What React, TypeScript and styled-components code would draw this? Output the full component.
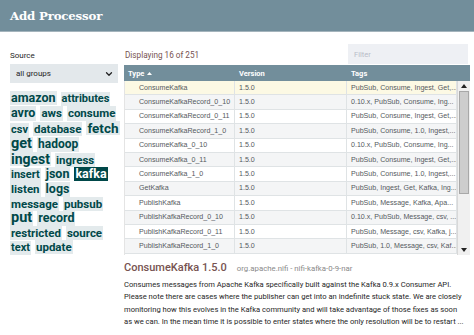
import React from 'react';
import styled, { createGlobalStyle } from 'styled-components';
import { ChevronDown } from 'lucide-react';

const Global = createGlobalStyle`
  body {
    margin: 0;
    background: #ffffff;
    font-family: Roboto, 'Liberation Sans', sans-serif;
  }
`;

const Dialog = styled.div`
  width: 474px;
  height: 335px;
  overflow: hidden;
  background: #ffffff;
`;

const Header = styled.header`
  height: 31px;
  background: #728e9b;
  border-bottom: 1px solid #a4b4bc;
  display: flex;
  align-items: center;
  padding-left: 10px;
  color: #ffffff;
  font-family: 'DejaVu Serif', serif;
  font-weight: bold;
  font-size: 11.8px;
  letter-spacing: -0.2px;
`;

const Body = styled.div`
  display: flex;
  gap: 6px;
  padding: 12px 4px 0 10px;
`;

const Side = styled.aside`
  width: 108px;
  display: flex;
  flex-direction: column;
`;

const Label = styled.div`
  font-size: 8px;
  color: #262626;
  margin-top: 7px;
  height: 13px;
`;

const Select = styled.div`
  height: 19px;
  background: #e3e8eb;
  display: flex;
  align-items: center;
  justify-content: space-between;
  padding: 0 4px 0 6px;
  font-size: 8px;
  color: #262626;
`;

const Cloud = styled.div`
  margin-top: 8px;
  width: 111px;
  display: flex;
  flex-wrap: wrap;
  align-items: baseline;
  column-gap: 4px;
  row-gap: 0;
`;

const Tag = styled.span<{ size: number; active?: boolean }>`
  font-size: ${p => p.size}px;
  font-weight: bold;
  line-height: 14.4px;
  height: 14.4px;
  padding: 0 1px;
  color: ${p => (p.active ? '#ffffff' : '#004849')};
  background: ${p => (p.active ? '#004849' : '#e3eaec')};
`;

const Main = styled.section`
  flex: 1;
  display: flex;
  flex-direction: column;
`;

const Toolbar = styled.div`
  height: 20px;
  display: flex;
  justify-content: space-between;
  align-items: flex-end;
`;

const Count = styled.div`
  font-size: 8.2px;
  color: #775351;
  padding: 0 0 4px 1px;
`;

const Filter = styled.div`
  width: 120px;
  height: 20px;
  margin-right: 2px;
  background: #eef0f4;
  color: #b8bcc8;
  font-size: 7.5px;
  display: flex;
  align-items: center;
  padding-left: 6px;
  box-sizing: border-box;
  align-self: flex-start;
`;

const Table = styled.div`
  margin-top: 1px;
  display: flex;
  flex-direction: column;
`;

const HeadRow = styled.div`
  height: 16px;
  display: grid;
  grid-template-columns: 111px 112px 1fr;
  background: #728e9b;
  color: #ffffff;
  font-size: 7.5px;
  font-weight: bold;
  align-items: center;
`;

const HeadCell = styled.div`
  padding-left: 4px;
  display: flex;
  align-items: center;
  gap: 3px;
`;

const BodyWrap = styled.div`
  height: 174px;
  display: flex;
  overflow: hidden;
  border-left: 1px solid #e4e4e4;
`;

const Rows = styled.div`
  flex: 1;
`;

const Row = styled.div<{ selected?: boolean; odd?: boolean }>`
  height: 14.4px;
  box-sizing: border-box;
  display: grid;
  grid-template-columns: 110px 112px 1fr;
  align-items: center;
  border-bottom: 1px solid #dfe3e5;
  background: ${p => (p.selected ? '#fcf9e4' : p.odd ? '#f4f5f6' : '#ffffff')};
  font-family: 'Liberation Sans', sans-serif;
  font-size: 7.1px;
  color: #555a5e;
`;

const Cell = styled.div<{ indent?: number }>`
  height: 100%;
  display: flex;
  align-items: center;
  padding-left: ${p => p.indent ?? 4}px;
  border-right: 1px solid #dfe3e5;
  white-space: nowrap;
  overflow: hidden;
`;

const Scroll = styled.div`
  width: 12px;
  display: flex;
  flex-direction: column;
  background: #f0f0f0;
  border-left: 1px solid #d8d8d8;
`;

const ScrollBtn = styled.div`
  height: 10px;
  display: flex;
  align-items: center;
  justify-content: center;
  background: #f0f0f0;
`;

const Thumb = styled.div`
  height: 103px;
  margin: 0 1px;
  background: #cdcdcd;
  border: 1px solid #a8a8a8;
  box-sizing: border-box;
`;

const Spacer = styled.div`
  flex: 1;
`;

const Details = styled.div`
  padding: 7px 0 0 0;
`;

const TitleLine = styled.div`
  display: flex;
  align-items: baseline;
  gap: 10px;
  line-height: 12px;
`;

const Title = styled.span`
  font-size: 11px;
  font-weight: 500;
  color: #775351;
`;

const Bundle = styled.span`
  font-size: 7.8px;
  color: #8a8a8a;
`;

const Desc = styled.p`
  margin: 4px 0 0;
  width: 340px;
  font-size: 7.6px;
  line-height: 12.4px;
  color: #262626;
`;

const tags: [string, number, boolean?][] = [
  ['amazon', 12.5],
  ['attributes', 11],
  ['avro', 12.5],
  ['aws', 11.5],
  ['consume', 11.5],
  ['csv', 11],
  ['database', 11.5],
  ['fetch', 13.5],
  ['get', 14.5],
  ['hadoop', 12],
  ['ingest', 14],
  ['ingress', 11.5],
  ['insert', 11],
  ['json', 12.5],
  ['kafka', 12.5, true],
  ['listen', 11.5],
  ['logs', 12.5],
  ['message', 11.5],
  ['pubsub', 11.5],
  ['put', 14.5],
  ['record', 12.5],
  ['restricted', 11.5],
  ['source', 11.5],
  ['text', 11],
  ['update', 11.5],
];

const rows: [string, string][] = [
  ['ConsumeKafka', 'PubSub, Consume, Ingest, Get,...'],
  ['ConsumeKafkaRecord_0_10', '0.10.x, PubSub, Consume, Ing...'],
  ['ConsumeKafkaRecord_0_11', 'PubSub, Consume, Ingest, Get,...'],
  ['ConsumeKafkaRecord_1_0', 'PubSub, Consume, 1.0, Ingest,...'],
  ['ConsumeKafka_0_10', '0.10.x, PubSub, Consume, Ing...'],
  ['ConsumeKafka_0_11', 'PubSub, Consume, Ingest, Get,...'],
  ['ConsumeKafka_1_0', 'PubSub, Consume, 1.0, Ingest,...'],
  ['GetKafka', 'PubSub, Ingest, Get, Kafka, Ing...'],
  ['PublishKafka', 'PubSub, Message, Kafka, Apa...'],
  ['PublishKafkaRecord_0_10', '0.10.x, PubSub, Message, csv, ...'],
  ['PublishKafkaRecord_0_11', 'PubSub, Message, csv, Kafka, j...'],
  ['PublishKafkaRecord_1_0', 'PubSub, 1.0, Message, csv, Kaf...'],
];

const Arrow = ({ up }: { up?: boolean }) => (
  <svg width="6" height="4" viewBox="0 0 6 4">
    <path d={up ? 'M0 4 L3 0 L6 4 Z' : 'M0 0 L3 4 L6 0 Z'} fill="#222" />
  </svg>
);

export default function App() {
  return (
    <Dialog>
      <Global />
      <Header>Add Processor</Header>
      <Body>
        <Side>
          <Label>Source</Label>
          <Select>
            all groups
            <ChevronDown size={10} strokeWidth={3} color="#222" />
          </Select>
          <Cloud>
            {tags.map(([t, s, a]) => (
              <Tag key={t} size={s} active={a}>
                {t}
              </Tag>
            ))}
          </Cloud>
        </Side>
        <Main>
          <Toolbar>
            <Count>Displaying 16 of 251</Count>
            <Filter>Filter</Filter>
          </Toolbar>
          <Table>
            <HeadRow>
              <HeadCell>
                Type
                <svg width="5" height="3" viewBox="0 0 5 3">
                  <path d="M0 3 L2.5 0 L5 3 Z" fill="#fff" />
                </svg>
              </HeadCell>
              <HeadCell>Version</HeadCell>
              <HeadCell>Tags</HeadCell>
            </HeadRow>
            <BodyWrap>
              <Rows>
                {rows.map(([type, tagText], i) => (
                  <Row key={type} selected={i === 0} odd={i % 2 === 1}>
                    <Cell indent={14}>{type}</Cell>
                    <Cell>1.5.0</Cell>
                    <Cell>{tagText}</Cell>
                  </Row>
                ))}
              </Rows>
              <Scroll>
                <ScrollBtn>
                  <Arrow up />
                </ScrollBtn>
                <Thumb />
                <Spacer />
                <ScrollBtn>
                  <Arrow />
                </ScrollBtn>
              </Scroll>
            </BodyWrap>
          </Table>
          <Details>
            <TitleLine>
              <Title>ConsumeKafka 1.5.0</Title>
              <Bundle>org.apache.nifi - nifi-kafka-0-9-nar</Bundle>
            </TitleLine>
            <Desc>
              Consumes messages from Apache Kafka specifically built against the Kafka 0.9.x Consumer API.
              Please note there are cases where the publisher can get into an indefinite stuck state. We are
              closely monitoring how this evolves in the Kafka community and will take advantage of those fixes
              as soon as we can. In the mean time it is possible to enter states where the only resolution will
              be to restart ...
            </Desc>
          </Details>
        </Main>
      </Body>
    </Dialog>
  );
}
